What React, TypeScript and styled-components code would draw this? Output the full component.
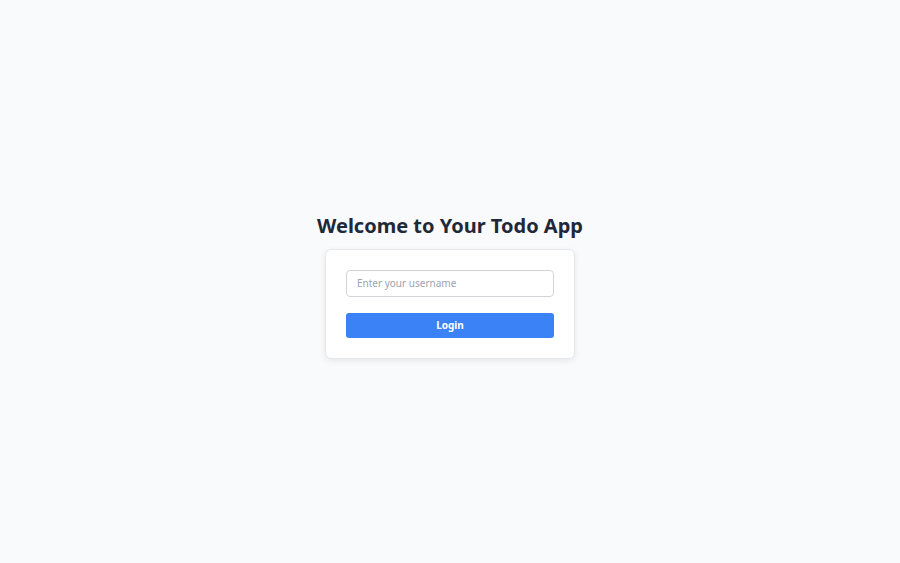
import React from "react";
import styled, { createGlobalStyle } from "styled-components";

const GlobalStyle = createGlobalStyle`
  * {
    box-sizing: border-box;
  }
  body {
    margin: 0;
    background: #f8fafc;
    font-family: "Noto Sans", "Open Sans", sans-serif;
  }
`;

const Page = styled.div`
  min-height: 100vh;
  padding-top: 6px;
  display: flex;
  flex-direction: column;
  align-items: center;
  justify-content: center;
`;

const Title = styled.h1`
  margin: 0 0 8px;
  font-size: 20px;
  line-height: 30px;
  font-weight: 700;
  color: #1f2937;
`;

const Card = styled.form`
  width: 250px;
  padding: 20px;
  background: #ffffff;
  border: 1px solid #e5e7eb;
  border-radius: 6px;
  box-shadow: 0 2px 6px rgba(0, 0, 0, 0.08);
  display: flex;
  flex-direction: column;
  gap: 16px;
`;

const Input = styled.input`
  width: 100%;
  height: 27px;
  padding: 0 10px;
  border: 1px solid #d1d5db;
  border-radius: 4px;
  font-family: inherit;
  font-size: 10px;
  color: #1f2937;
  outline: none;

  &::placeholder {
    color: #9ca3af;
  }
`;

const Button = styled.button`
  width: 100%;
  height: 25px;
  border: none;
  border-radius: 3px;
  background: #3b82f6;
  color: #ffffff;
  font-family: inherit;
  font-size: 10px;
  font-weight: 700;
  cursor: pointer;
`;

function App() {
  return (
    <Page>
      <GlobalStyle />
      <Title>Welcome to Your Todo App</Title>
      <Card onSubmit={(e) => e.preventDefault()}>
        <Input type="text" placeholder="Enter your username" />
        <Button type="submit">Login</Button>
      </Card>
    </Page>
  );
}

export default App;
